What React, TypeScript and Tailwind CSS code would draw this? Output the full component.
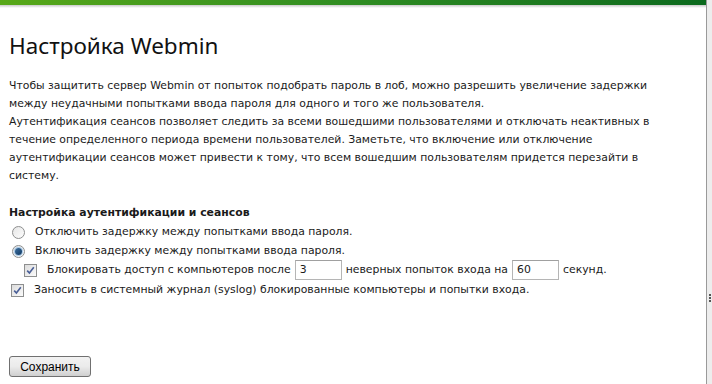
import React from "react";

// Win7-like radio
function Radio({ checked }: { checked?: boolean }) {
  return (
    <span className="w-[13px] h-[13px] rounded-full border border-[#8e8f8f] bg-gradient-to-br from-[#e6e6e6] to-[#fdfdfd] flex items-center justify-center shrink-0">
      {checked && (
        <span className="w-[7px] h-[7px] rounded-full bg-gradient-to-br from-[#3c6fa0] to-[#0f3a64] shadow-[0_0_1px_1px_#9cc3e6]" />
      )}
    </span>
  );
}

function Check() {
  return (
    <span className="w-[13px] h-[13px] border border-[#8e8f8f] bg-gradient-to-br from-[#dcdcdc] to-[#fbfbfb] flex items-center justify-center shrink-0">
      <svg width="9" height="9" viewBox="0 0 9 9">
        <path d="M1.2 4.6 L3.4 7 L7.8 1.2" fill="none" stroke="#4a5f97" strokeWidth="1.6" />
      </svg>
    </span>
  );
}

function Field({ value }: { value: string }) {
  return (
    <span className="w-[47px] h-[20px] border border-[#b5b5b5] border-t-[#a0a0a0] bg-white flex items-center px-[4px] shrink-0">
      {value}
    </span>
  );
}

export default function App() {
  return (
    <div className="w-[712px] h-[384px] bg-white flex overflow-hidden text-[#1a1a1a] font-['DejaVu_Sans',sans-serif] text-[10.85px]">
      <div className="w-[706px] flex flex-col">
        {/* верхняя полоса */}
        <div className="h-[5px] bg-gradient-to-r from-[#58a818] via-[#2f8d22] to-[#0b6a1e]" />
        <div className="h-[3px] bg-gradient-to-b from-[#c9c9c9] to-white" />

        <div className="pl-[9px] flex flex-col">
          <h1 className="mt-[23px] text-[22.5px] leading-[30px] font-['Noto_Sans',sans-serif] text-[#111]">Настройка Webmin</h1>

          <p className="mt-[16px] leading-[18px] whitespace-nowrap">
            Чтобы защитить сервер Webmin от попыток подобрать пароль в лоб, можно разрешить увеличение задержки
            <br />
            между неудачными попытками ввода пароля для одного и того же пользователя.
            <br />
            Аутентификация сеансов позволяет следить за всеми вошедшими пользователями и отключать неактивных в
            <br />
            течение определенного периода времени пользователей. Заметьте, что включение или отключение
            <br />
            аутентификации сеансов может привести к тому, что всем вошедшим пользователям придется перезайти в
            <br />
            систему.
          </p>

          <div className="mt-[19px] font-bold leading-[18px]">Настройка аутентификации и сеансов</div>

          <div className="flex flex-col">
            <div className="h-[19px] flex items-center gap-[10px] pl-[3px] mt-[1px]">
              <Radio />
              <span>Отключить задержку между попытками ввода пароля.</span>
            </div>
            <div className="h-[18px] flex items-center gap-[10px] pl-[3px]">
              <Radio checked />
              <span>Включить задержку между попытками ввода пароля.</span>
            </div>
            <div className="h-[20px] flex items-center pl-[15px]">
              <Check />
              <span className="ml-[10px]">Блокировать доступ с компьютеров после</span>
              <span className="ml-[4px]"><Field value="3" /></span>
              <span className="ml-[4px]">неверных попыток входа на</span>
              <span className="ml-[4px]"><Field value="60" /></span>
              <span className="ml-[4px]">секунд.</span>
            </div>
            <div className="h-[20px] flex items-center gap-[10px] pl-[2px]">
              <Check />
              <span>Заносить в системный журнал (syslog) блокированные компьютеры и попытки входа.</span>
            </div>
          </div>

          <div className="mt-[56px]">
            <button className="w-[82px] h-[21px] border border-[#707070] rounded-[3px] bg-gradient-to-b from-[#f2f2f2] via-[#ebebeb] to-[#cfcfcf] text-[12px] font-['Liberation_Sans',sans-serif] text-black">
              Сохранить
            </button>
          </div>
        </div>
      </div>

      {/* правая рамка */}
      <div className="w-[1px] bg-[#9a9a9a]" />
      <div className="flex-1 bg-[#ededed] flex flex-col items-center pt-[294px]">
        <div className="flex flex-col gap-[1px]">
          <span className="w-[2px] h-[2px] bg-[#555]" />
          <span className="w-[2px] h-[2px] bg-[#555]" />
          <span className="w-[2px] h-[2px] bg-[#555]" />
        </div>
      </div>
    </div>
  );
}
